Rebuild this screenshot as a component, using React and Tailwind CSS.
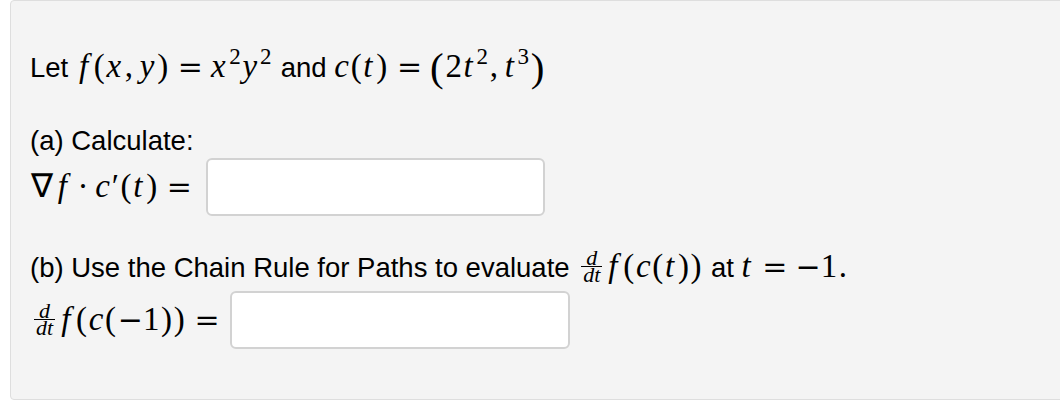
import React from "react";

const S = "font-['Liberation_Serif',serif]";
const D = "font-['DejaVu_Serif',serif]";

function M({ children }) {
  return <span className={`${S} text-[33px] tracking-[1.7px] whitespace-nowrap`}>{children}</span>;
}
function F() {
  return <span className={`${S} italic ml-[3px] mr-[4px]`}>f</span>;
}
function V({ children, cls = "" }) {
  return <span className={`${S} italic ${cls}`}>{children}</span>;
}
function Sup({ children }) {
  return (
    <span className={`${S} relative -top-[13px] text-[23px] leading-none ml-[1px]`}>{children}</span>
  );
}
function Eq() {
  return <span className={`${D} text-[30px] tracking-normal mx-[8px]`}>=</span>;
}
function Minus() {
  return <span className={`${D} text-[30px] tracking-normal`}>−</span>;
}
function Frac() {
  return (
    <span className={`${S} italic tracking-normal inline-flex flex-col items-center align-middle text-[22px] leading-[16px] ml-[4px] mr-[3px] relative -top-[3px]`}>
      <span className="px-[2px]">d</span>
      <span className="w-full h-[1px] bg-black"></span>
      <span className="px-[2px]">dt</span>
    </span>
  );
}
function Big({ children }) {
  return (
    <span className={`${S} text-[41px] leading-none relative top-[4px]`}>{children}</span>
  );
}

export default function App() {
  return (
    <div className="w-[1060px] h-[418px] bg-white overflow-hidden pl-[10px] font-['Liberation_Sans',Arial,sans-serif] text-[27.5px] text-black">
      <div className="w-[1080px] h-[400px] bg-[#f4f4f4] border border-[#dedede] rounded-[4px] pl-[19px] pt-[42px]">
        <div className="leading-[40px] h-[40px] whitespace-nowrap">
          Let{" "}
          <M>
            <F />(<V cls="mr-[2px]">x</V>,<V cls="ml-[5px] mr-[1px]">y</V>)
            <Eq />
            <V cls="mr-[1px]">x</V><Sup>2</Sup><V>y</V><Sup>2</Sup>
          </M>{" "}
          and{" "}
          <M>
            <V>c</V>(<V cls="mr-[2px]">t</V>)
            <Eq />
            <Big>(</Big>2<V cls="mr-[1px]">t</V><Sup>2</Sup>,<V cls="ml-[5px] mr-[1px]">t</V><Sup>3</Sup><Big>)</Big>
          </M>
        </div>

        <div className="mt-[42px] leading-[32px] h-[32px]">(a) Calculate:</div>
        <div className="flex items-center mt-[1px]">
          <M>
            <span className="ml-[1px]">∇</span><F /><span className="mx-[5px]">·</span><V>c</V>′(<V cls="mr-[2px]">t</V>)
            <Eq />
          </M>
          <div className="ml-[6px] w-[339px] h-[58px] bg-white border-2 border-[#d2d2d2] rounded-[6px]"></div>
        </div>

        <div className="mt-[34px] leading-[32px] h-[32px] whitespace-nowrap">
          (b) Use the Chain Rule for Paths to evaluate{" "}
          <M>
            <Frac />
            <F />(<V>c</V>(<V cls="mr-[2px]">t</V>))
          </M>{" "}
          at{" "}
          <M>
            <V cls="mr-[2px]">t</V>
            <Eq />
            <Minus />1.
          </M>
        </div>
        <div className="flex items-center mt-[9px]">
          <M>
            <Frac />
            <F />(<V>c</V>(<Minus />1))
            <Eq />
          </M>
          <div className="ml-[2px] w-[340px] h-[58px] bg-white border-2 border-[#d2d2d2] rounded-[6px]"></div>
        </div>
      </div>
    </div>
  );
}
